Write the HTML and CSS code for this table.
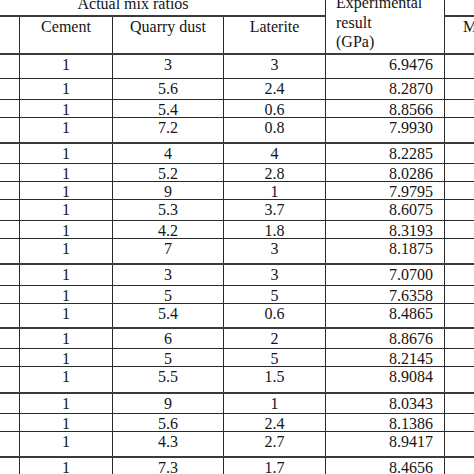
FILE: index.html
```html
<!DOCTYPE html>
<html>
<head>
<meta charset="utf-8">
<link rel="stylesheet" href="styles.css">
</head>
<body>
<div class="viewport">
<table class="data">
<colgroup>
<col class="c0"><col class="c1"><col class="c2"><col class="c3"><col class="c4"><col class="c5">
</colgroup>
<thead>
<tr class="h23">
<th colspan="4" class="group">Actual mix ratios</th>
<th rowspan="2" class="exp">Experimental<br>result<br>(GPa)</th>
<th class="blank"></th>
</tr>
<tr class="h38 thick">
<th></th>
<th>Cement</th>
<th>Quarry dust</th>
<th>Laterite</th>
<th class="model">Model result (GPa)</th>
</tr>
</thead>
<tbody>
<tr class="h25"><td></td><td>1</td><td>3</td><td>3</td><td class="num">6.9476</td><td></td></tr>
<tr class="h21"><td></td><td>1</td><td>5.6</td><td>2.4</td><td class="num">8.2870</td><td></td></tr>
<tr class="h18"><td></td><td>1</td><td>5.4</td><td>0.6</td><td class="num">8.8566</td><td></td></tr>
<tr class="h25 thick"><td></td><td>1</td><td>7.2</td><td>0.8</td><td class="num">7.9930</td><td></td></tr>
<tr class="h21"><td></td><td>1</td><td>4</td><td>4</td><td class="num">8.2285</td><td></td></tr>
<tr class="h18"><td></td><td>1</td><td>5.2</td><td>2.8</td><td class="num">8.0286</td><td></td></tr>
<tr class="h18"><td></td><td>1</td><td>9</td><td>1</td><td class="num">7.9795</td><td></td></tr>
<tr class="h21"><td></td><td>1</td><td>5.3</td><td>3.7</td><td class="num">8.6075</td><td></td></tr>
<tr class="h18"><td></td><td>1</td><td>4.2</td><td>1.8</td><td class="num">8.3193</td><td></td></tr>
<tr class="h25 thick"><td></td><td>1</td><td>7</td><td>3</td><td class="num">8.1875</td><td></td></tr>
<tr class="h22"><td></td><td>1</td><td>3</td><td>3</td><td class="num">7.0700</td><td></td></tr>
<tr class="h18"><td></td><td>1</td><td>5</td><td>5</td><td class="num">7.6358</td><td></td></tr>
<tr class="h24 thick"><td></td><td>1</td><td>5.4</td><td>0.6</td><td class="num">8.4865</td><td></td></tr>
<tr class="h21"><td></td><td>1</td><td>6</td><td>2</td><td class="num">8.8676</td><td></td></tr>
<tr class="h18"><td></td><td>1</td><td>5</td><td>5</td><td class="num">8.2145</td><td></td></tr>
<tr class="h26 thick"><td></td><td>1</td><td>5.5</td><td>1.5</td><td class="num">8.9084</td><td></td></tr>
<tr class="h21"><td></td><td>1</td><td>9</td><td>1</td><td class="num">8.0343</td><td></td></tr>
<tr class="h18"><td></td><td>1</td><td>5.6</td><td>2.4</td><td class="num">8.1386</td><td></td></tr>
<tr class="h25 thick"><td></td><td>1</td><td>4.3</td><td>2.7</td><td class="num">8.9417</td><td></td></tr>
<tr class="h25"><td></td><td>1</td><td>7.3</td><td>1.7</td><td class="num">8.4656</td><td></td></tr>
</tbody>
</table>
</div>
</body>
</html>
```

FILE: styles.css
```css
html, body {
  margin: 0;
  padding: 0;
  background: #fff;
}

.viewport {
  width: 474px;
  height: 474px;
  overflow: hidden;
}

.data {
  margin: -8px 0 0 -60px;
  border-collapse: collapse;
  table-layout: fixed;
  width: 604px;
  font-family: "Liberation Serif", "Times New Roman", serif;
  font-size: 16px;
  color: #151515;
}

.c0 { width: 79px; }
.c1 { width: 93px; }
.c2 { width: 111px; }
.c3 { width: 102px; }
.c4 { width: 119px; }
.c5 { width: 100px; }

.data th,
.data td {
  box-sizing: border-box;
  border: 1px solid #2a2a2a;
  padding: 2px 4px 0;
  line-height: 15px;
  vertical-align: top;
  text-align: center;
  font-weight: normal;
  white-space: nowrap;
}

.data tr.thick > th,
.data tr.thick > td {
  border-bottom: 2px solid #3a3a3a;
}

.data th.group {
  padding-top: 3px;
  border-bottom: 2px solid #3a3a3a;
}

.data th.blank {
  border-bottom: 2px solid #3a3a3a;
}

.data th.exp {
  text-align: left;
  padding: 0 4px 0 10px;
  line-height: 19.5px;
  border-bottom: 2px solid #3a3a3a;
}

.data th.model {
  text-align: left;
  padding-left: 18px;
}

.data td.num {
  text-align: right;
  padding-right: 11px;
}

.h18 > td, .h18 > th { height: 18px; }
.h21 > td, .h21 > th { height: 21px; }
.h22 > td, .h22 > th { height: 22px; }
.h23 > td, .h23 > th { height: 23px; }
.h24 > td, .h24 > th { height: 24px; }
.h25 > td, .h25 > th { height: 25px; }
.h26 > td, .h26 > th { height: 26px; }
.h38 > td, .h38 > th { height: 38px; }
```
